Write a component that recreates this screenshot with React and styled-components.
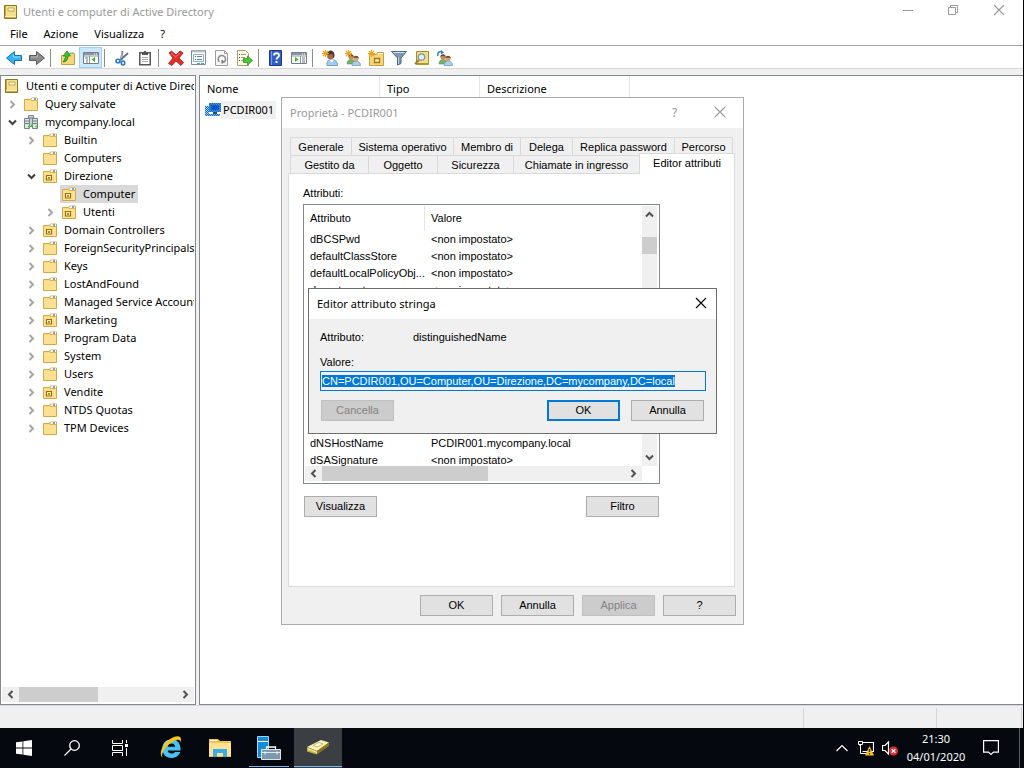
import React, { useEffect, useRef } from "react";
import styled, { createGlobalStyle, css } from "styled-components";

const Global = createGlobalStyle`
  *, *::before, *::after { box-sizing: border-box; }
  body { margin: 0; background: #000; }
  button, input { font: inherit; color: inherit; }
  svg { flex: none; }
`;

const shellFont = `"Noto Sans", "Open Sans", sans-serif`;
const dialogFont = `"Liberation Sans", Arial, sans-serif`;

/* ---------- main window ---------- */

const Desktop = styled.div`
  position: relative;
  display: flex;
  flex-direction: column;
  min-height: 100vh;
  font: 11px/18px ${shellFont};
  color: #000;
`;

const MainWindow = styled.main`
  flex: 1;
  display: flex;
  flex-direction: column;
  min-width: 0;
  background: #f0f0f0;
  border-right: 1px solid #000;
`;

const TitleBar = styled.header`
  display: flex;
  align-items: center;
  height: 24px;
  padding-left: 3px;
  gap: 4px;
  background: #fff;
  color: #999;
`;

const Title = styled.h1`
  flex: 1;
  margin: 0;
  font-size: 11px;
  font-weight: 400;
`;

const CaptionButtons = styled.div`
  display: flex;
  align-self: flex-start;
`;

const CaptionButton = styled.button`
  display: grid;
  place-items: center;
  width: ${(p) => p.$width || 45}px;
  height: 20px;
  padding: 0;
  border: 0;
  background: none;
  font-size: 12px;
`;

const MenuBar = styled.nav`
  display: flex;
  height: 21px;
  padding-left: 2px;
  background: #fff;
`;

const MenuItem = styled.button`
  height: 20px;
  padding: 0 8px;
  border: 0;
  background: none;
`;

const Toolbar = styled.div`
  display: flex;
  align-items: center;
  height: 24px;
  padding: 1px 0 0 2px;
  background: #fff;
  border-top: 1px solid #a5a5ad;
  border-bottom: 1px solid #d8d8d8;
`;

const ToolButton = styled.button`
  display: grid;
  place-items: center;
  width: 23px;
  height: 21px;
  padding: 0;
  border: 1px solid ${(p) => (p.$on ? "#99d1ff" : "transparent")};
  background: ${(p) => (p.$on ? "#cce8ff" : "none")};
`;

const ToolDivider = styled.span`
  width: 8px;
  height: 18px;
  padding-left: 2px;
  &::before {
    content: "";
    display: block;
    width: 1px;
    height: 100%;
    background: #8c8c8c;
  }
`;

const Panes = styled.div`
  flex: 1;
  display: flex;
  gap: 3px;
  padding-top: 6px;
  min-height: 0;
`;

const Pane = styled.section`
  display: flex;
  flex-direction: column;
  min-width: 0;
  background: #fff;
  border: 1px solid #828790;
  ${(p) => (p.$width ? css`width: ${p.$width}px;` : css`flex: 1; border-right: 0;`)}
`;

const Tree = styled.ul`
  flex: 1;
  margin: 0 1px 0 0;
  padding: 1px 0 0;
  list-style: none;
  overflow: hidden;
`;

const TreeRow = styled.li`
  display: flex;
  align-items: center;
  height: 18px;
  padding-left: ${(p) => (p.$depth ? p.$depth * 19 - 14 : 2)}px;
  white-space: nowrap;
`;

const Twisty = styled.span`
  display: grid;
  place-items: center;
  flex: none;
  width: 13px;
  margin-right: 3px;
`;

const TreeNode = styled.span`
  display: flex;
  align-items: center;
  gap: 6px;
  height: 18px;
  padding: 0 3px 0 1px;
  background: ${(p) => (p.$selected ? "#d9d9d9" : "none")};
`;

const ListHead = styled.div`
  display: flex;
  height: 22px;
  line-height: 25px;
`;

const ListHeadCell = styled.span`
  width: ${(p) => p.$width}px;
  padding-left: 7px;
  border-right: 1px solid #e5e5e5;
`;

const ListItem = styled.div`
  display: flex;
  align-items: center;
  height: 18px;
  margin: 3px 0 0 5px;
`;

const ListLabel = styled.span`
  height: 18px;
  padding: 0 2px;
  background: #f0f0f0;
`;

const StatusBar = styled.footer`
  display: flex;
  justify-content: flex-end;
  height: 23px;
  padding-top: 2px;
  border-top: 1px solid #d8d8d8;
`;

const StatusCell = styled.span`
  width: ${(p) => p.$width}px;
  height: 20px;
  border-left: 1px solid #d5d5d5;
`;

/* ---------- scroll bars ---------- */

const ScrollTrack = styled.div`
  display: flex;
  align-items: center;
  flex-direction: ${(p) => (p.$vertical ? "column" : "row")};
  flex: none;
  ${(p) => (p.$vertical ? "width: 15px;" : "height: 15px;")}
  margin: ${(p) => p.$margin || "0"};
  background: #f0f0f0;
`;

const ScrollArrow = styled.button`
  display: grid;
  place-items: center;
  width: 17px;
  height: 17px;
  padding: 0;
  border: 0;
  background: none;
`;

const ScrollThumb = styled.span`
  ${(p) =>
    p.$vertical
      ? css`width: 100%; height: ${p.$size}px; margin-top: ${p.$offset}px;`
      : css`height: 100%; width: ${p.$size}px;`}
  background: #cdcdcd;
`;

const Grow = styled.span`
  flex: 1;
`;

/* ---------- dialogs ---------- */

const Dialog = styled.section`
  position: absolute;
  left: ${(p) => p.$x}px;
  top: ${(p) => p.$y}px;
  width: ${(p) => p.$width}px;
  display: flex;
  flex-direction: column;
  background: #f0f0f0;
  border: 1px solid ${(p) => (p.$active ? "#6d6d6d" : "#aaa")};
  font: 11px/17px ${dialogFont};
`;

const DialogTitle = styled.header`
  display: flex;
  align-items: center;
  height: 30px;
  padding: 0 1px 2px 8px;
  background: #fff;
  color: ${(p) => (p.$active ? "#000" : "#999")};
  font-family: ${shellFont};
`;

const DialogHeading = styled.h2`
  flex: 1;
  margin: 0;
  font-size: 11px;
  font-weight: 400;
`;

const TabArea = styled.div`
  padding: 9px 8px 0 6px;
`;

const TabRow = styled.div`
  display: flex;
  height: 18px;
  padding-left: 2px;
`;

const Tab = styled.button`
  flex: none;
  width: ${(p) => p.$width}px;
  height: 18px;
  padding: 1px 0 0;
  border: 1px solid #d9d9d9;
  border-width: 1px 0 0 1px;
  background: #f0f0f0;
  &:last-child {
    border-right-width: 1px;
  }
  ${(p) =>
    p.$active &&
    css`
      position: relative;
      height: 21px;
      margin-top: -2px;
      padding: 0 0 2px;
      background: #fff;
    `}
`;

const TabPanel = styled.div`
  height: 414px;
  padding: 11px 14px;
  background: #fff;
  border: 1px solid #d9d9d9;
`;

const AttributeBox = styled.div`
  display: flex;
  flex-direction: column;
  width: 357px;
  height: 280px;
  margin: 2px 0 12px;
  padding: 1px;
  border: 1px solid #828790;
`;

const AttributeView = styled.div`
  flex: 1;
  display: flex;
  min-height: 0;
`;

const AttributeScroll = styled.div`
  flex: 1;
  overflow: hidden;
`;

const AttributeTable = styled.table`
  width: 100%;
  table-layout: fixed;
  border-spacing: 0;
  white-space: nowrap;
  th {
    height: 25px;
    padding: 0 5px;
    text-align: left;
    font-weight: 400;
  }
  th:first-child {
    width: 120px;
    border-right: 1px solid #e5e5e5;
  }
  th:last-child,
  td:last-child {
    padding-left: 6px;
  }
  td {
    height: 17px;
    padding: 0 0 0 5px;
  }
`;

const ButtonRow = styled.div`
  display: flex;
  justify-content: ${(p) => p.$justify || "flex-end"};
  gap: ${(p) => p.$gap || 8}px;
  ${(p) => p.$width && css`width: ${p.$width}px;`}
  padding: ${(p) => p.$padding || "0"};
`;

const PushButton = styled.button`
  width: 73px;
  height: 21px;
  padding: 0;
  border: 1px solid #adadad;
  background: #e1e1e1;
  ${(p) => p.$primary && css`border: 2px solid #0078d7;`}
  &:disabled {
    color: #838383;
    background: #ccc;
    border-color: #bfbfbf;
  }
`;

const EditorBody = styled.div`
  display: flex;
  flex-direction: column;
  padding: 10px 10px 12px 11px;
`;

const FieldLine = styled.div`
  display: flex;
  height: 25px;
`;

const FieldLabel = styled.label`
  height: 17px;
`;

const FieldName = styled.span`
  width: 93px;
`;

const ValueInput = styled.input`
  width: 100%;
  height: 20px;
  margin-bottom: 9px;
  padding: 0 1px;
  border: 1px solid #0078d7;
  border-radius: 0;
  outline: 0;
  background: #f0f0f0;
  caret-color: transparent;
  &::selection {
    color: #fff;
    background: #0078d7;
  }
`;

/* ---------- taskbar ---------- */

const Taskbar = styled.footer`
  display: flex;
  align-items: center;
  height: 40px;
  background: #05080e;
  color: #fff;
`;

const TaskButton = styled.button`
  display: grid;
  place-items: center;
  width: 48px;
  height: 40px;
  padding: 0;
  border: 0;
  background: none;
  ${(p) =>
    p.$running &&
    css`
      background-image: linear-gradient(#76b9ed, #76b9ed);
      background-size: ${p.$active ? "48px" : "40px"} 1px;
      background-position: center 38px;
      background-repeat: no-repeat;
      background-color: ${p.$active ? "#3b3e42" : "transparent"};
    `}
`;

const PinnedApps = styled.div`
  display: flex;
  gap: 1px;
  margin-left: 3px;
`;

const Tray = styled.div`
  display: flex;
  align-items: center;
  gap: 8px;
  margin-left: auto;
  height: 40px;
`;

const TrayButton = styled.button`
  display: grid;
  place-items: center;
  width: 16px;
  height: 24px;
  padding: 0;
  border: 0;
  background: none;
`;

const Clock = styled.time`
  width: 60px;
  margin-right: 9px;
  text-align: center;
  line-height: 18px;
`;

const ShowDesktop = styled.button`
  width: 5px;
  height: 40px;
  margin-left: 12px;
  padding: 0;
  border: 0;
  border-left: 1px solid #5a5c60;
  background: none;
`;

/* ---------- icons ---------- */

const Icon = ({ size = 16, children, ...rest }) => (
  <svg width={size} height={size} viewBox={`0 0 ${size} ${size}`} aria-hidden="true" {...rest}>
    {children}
  </svg>
);

const BookIcon = () => (
  <Icon>
    <path d="M1.500 1.500h12v13h-12z" fill="#cda93c" stroke="#8f7620" />
    <path d="M3 2h10v10H3z" fill="#f3df8e" />
    <path d="M5 4h6v3H5z" fill="#fffbe6" stroke="#c3a548" />
    <path d="M2 12.500h11" stroke="#fff3bb" />
  </Icon>
);

const FolderIcon = ({ ou }) => (
  <Icon>
    <path d="M1.500 14.500v-11h6l1-1.500h6v12.500z" fill="#f9d983" stroke="#d3a948" />
    <path d="M2 5h12v9H2z" fill="#fbe092" />
    <path d="M9 3h5" stroke="#fff" strokeWidth="1.500" />
    <path d="M11 3h2" stroke="#2f91e5" strokeWidth="1.500" />
    <path d="M8 4.500h6" stroke="#d9b45a" />
    {ou && <path d="M4.500 7.500h5v4.500h-5z" fill="#fff0af" stroke="#92701a" strokeWidth="1.200" />}
    {ou && <path d="M6 9h2v2H6z" fill="#b58d28" />}
  </Icon>
);

const DomainIcon = () => (
  <Icon>
    <path d="M5.500 1.500h5v11h-5z" fill="#c7d0d6" stroke="#7d8991" />
    <path d="M1.500 4.500h5v10h-5zM9.500 4.500h5v10h-5z" fill="#dde3e7" stroke="#77838b" />
    <path d="M2 7h4M2 9.500h4M10 7h4M10 9.500h4M6 4h4" stroke="#6e7b84" />
    <path d="M5 12.500h2M8 11h1.500M12.500 12.500h2" stroke="#3fd41c" strokeWidth="2" />
  </Icon>
);

const ComputerIcon = () => (
  <Icon>
    <defs>
      <pattern id="dither" width="2" height="2" patternUnits="userSpaceOnUse">
        <path d="M0 0h1v1H0zM1 1h1v1H1z" fill="#0f6fd0" />
      </pattern>
    </defs>
    <path d="M0 4h4v10H0z" fill="#a9c9e6" />
    <path d="M4 1h12v9H4z" fill="#4f8fd8" />
    <path d="M6 3h8v5H6z" fill="#0c3fb0" />
    <path d="M8 10h4v2H8z" fill="#1a4c96" />
    <path d="M3 12h12v2H3z" fill="#8db8e2" />
    <path d="M0 4h4v10H0zM4 1h12v9H4zM3 12h12v2H3z" fill="url(#dither)" />
  </Icon>
);

const ArrowIcon = ({ forward }) => (
  <Icon>
    <path
      d={forward ? "M.5 5.500h7V1.500L15.500 8l-8 6.500v-4h-7z" : "M15.500 5.500h-7V1.500L.5 8l8 6.500v-4h7z"}
      fill={forward ? "#8b8b8b" : "#35b2ef"}
      stroke={forward ? "#5a5a5a" : "#1a70b5"}
    />
    <path d={forward ? "M2 7h6.500V4.500" : "M14 7H7.500V4.500"} fill="none" stroke={forward ? "#b4b4b4" : "#93ddfb"} />
  </Icon>
);

const FolderUpIcon = () => (
  <Icon>
    <path d="M1.500 14.500v-9h5l1-2h7v11z" fill="#f8d67b" stroke="#c79e3e" />
    <path d="M10 3h4" stroke="#6db2e9" />
    <path d="M3 12c3 0 5-2 5-6h2.500L7 1 3 6h2.500c0 2-1 4-2.500 6z" fill="#42be35" stroke="#23871c" strokeWidth=".8" />
  </Icon>
);

const WindowTreeIcon = ({ play }) => (
  <Icon>
    <path d="M.5 2.500h15v11H.5z" fill="#fff" stroke="#737f88" />
    <path d="M1 3h14v2H1z" fill="#8b98a1" />
    <path d="M11 4h1M13 4h1" stroke="#fff" />
    <path d="M1 6h14" stroke="#8b98a1" />
    {play ? (
      <>
        <path d="M9.500 6v7" stroke="#8b98a1" />
        <path d="M4 7v5l3.500-2.500z" fill="#3db526" />
        <path d="M11 8h3M11 10h3M11 12h3" stroke="#6d7a84" />
      </>
    ) : (
      <>
        <path d="M6.500 6v7" stroke="#8b98a1" />
        <path d="M12 7v5L8.500 9.500z" fill="#3db526" />
        <path d="M2 8h3M3 10h2M3 12h2" stroke="#6d7a84" />
      </>
    )}
  </Icon>
);

const ScissorsIcon = () => (
  <Icon>
    <path d="M8.500 1 7 9.500M14 3 6.500 10" stroke="#5d7287" strokeWidth="1.800" />
    <path d="M8 2 7.500 8" stroke="#cfdbe5" strokeWidth=".7" />
    <ellipse cx="4" cy="11" rx="2" ry="1.800" fill="none" stroke="#2877cc" strokeWidth="1.600" />
    <ellipse cx="9" cy="13" rx="1.700" ry="2" fill="none" stroke="#2877cc" strokeWidth="1.600" />
  </Icon>
);

const ClipboardIcon = () => (
  <Icon>
    <path d="M2.750 2.750h10.500v12H2.750z" fill="#fff" stroke="#555" strokeWidth="1.500" />
    <path d="M5 5V2h2V1h2v1h2v3z" fill="#555" />
    <path d="M5 7.500h6M5 9.500h6M5 11.500h6" stroke="#aaa" />
  </Icon>
);

const DeleteIcon = () => (
  <Icon>
    <path d="m1 3 2.500-2L8 5l4-4 3 2-4 5 4.500 4.500L13 15.500 8 11l-4 4.500-3.500-2L5 8z" fill="#e32d2d" stroke="#ad1515" strokeWidth=".8" />
    <path d="m3 3 4.500 4L12 3" fill="none" stroke="#f27a70" />
  </Icon>
);

const PropertiesIcon = () => (
  <Icon>
    <path d="M.5.500h14v14H.5z" fill="#fff" stroke="#7f8d98" />
    <path d="M1 1.500h13" stroke="#b8c5ce" strokeWidth="2" />
    <path d="M2.500 4.500h10v7h-10z" fill="#f5fbff" stroke="#98aebd" />
    <path d="M4 6.500h1M4 9.500h1" stroke="#1f80cc" />
    <path d="M6 6.500h5M6 9.500h5" stroke="#6d8090" />
    <path d="M6 13.500h3M10 13.500h3" stroke="#35abd8" />
  </Icon>
);

const RefreshIcon = () => (
  <Icon>
    <path d="M1.500.5h9l3 3v12h-12z" fill="#f7f7f7" stroke="#9d9d9d" />
    <path d="M10.500.5v3h3" fill="none" stroke="#9d9d9d" />
    <path d="M5.500 12a3.700 3.700 0 1 1 4.500.2" fill="none" stroke="#8b8b8b" strokeWidth="1.600" />
    <path d="M7.500 9.500V14l3.500-2z" fill="#777" />
  </Icon>
);

const ExportIcon = () => (
  <Icon>
    <path d="M.5.5h8l3 3v12H.5z" fill="#fffbe2" stroke="#a8a06f" />
    <path d="M2 4.500h1M2 7.500h1M2 10.500h1" stroke="#444" />
    <path d="M4 4.500h5M4 7.500h4M4 10.500h3" stroke="#999" />
    <path d="M6.500 8.500h4V6l5 4.500-5 4.500v-2.500h-4z" fill="#4cc63a" stroke="#318d24" strokeWidth=".8" />
  </Icon>
);

const HelpIcon = () => (
  <Icon>
    <path d="M1.500.5h12v15h-12z" fill="#305fc6" stroke="#1b388e" />
    <path d="M3.500 1v14" stroke="#7c9de6" />
    <path d="M6 5.500c0-3 5-3 5 0 0 2-2.500 2-2.500 4" fill="none" stroke="#fff" strokeWidth="1.800" />
    <path d="M7.500 11h2v2h-2z" fill="#fff" />
  </Icon>
);

const Spark = () => (
  <path d="M3.500 0v7M0 3.500h7M1 1l5 5M6 1 1 6" stroke="#eda21c" strokeWidth="1.100" />
);

const Person = ({ x, y, shirt, skin, hair }) => (
  <g transform={`translate(${x} ${y})`}>
    <path d="M0 10c0-3 1.500-4.500 4-4.500S8.500 7 8.500 10z" fill={shirt} stroke="#5788b5" strokeWidth=".6" />
    <circle cx="4" cy="3.300" r="2.500" fill={skin} />
    <path d="M1.300 3C1.300-.7 6.800-.7 6.800 3 5 2 3 1.500 1.300 3z" fill={hair} />
  </g>
);

const UserIcon = () => (
  <Icon>
    <path d="M5 15.500c-.5-4 1-6 4.500-6s6 2 6 6z" fill="#a3cdf0" stroke="#5c8dba" strokeWidth=".8" />
    <path d="m7 9.500 3 3 2-3z" fill="#fff" />
    <ellipse cx="8.500" cy="5.500" rx="3.500" ry="4" fill="#a36d45" />
    <path d="M5 5c0-6 7.500-6 7.500 0 0 2-.5 3-1 3.500L10.500 4z" fill="#4f3a2b" />
    <Spark />
  </Icon>
);

const GroupIcon = ({ refresh }) => (
  <Icon>
    <Person x={2} y={4} shirt="#76b44d" skin="#c98e59" hair="#6a452a" />
    <Person x={7} y={5.500} shirt="#a8d0f0" skin="#d8a26c" hair="#5e4630" />
    {refresh ? (
      <>
        <path d="M1 6C0 2 3 1 5 2" fill="none" stroke="#2585d0" strokeWidth="1.500" />
        <path d="M4 0v4.500L7 2.500z" fill="#2585d0" />
      </>
    ) : (
      <Spark />
    )}
  </Icon>
);

const NewOuIcon = () => (
  <Icon>
    <path d="M1.500 15.500v-11h7l1-2h6v13z" fill="#f8d67b" stroke="#c79e3e" />
    <path d="M10 3.500h5" stroke="#fff" />
    <path d="M6.500 8.500h5v4h-5z" fill="#fff0ae" stroke="#a27a1c" strokeWidth="1.400" />
    <Spark />
  </Icon>
);

const FilterIcon = () => (
  <Icon>
    <path d="M.5 1.500h15L10 8v5.500L6.500 15V8z" fill="#7d98b1" stroke="#4d6984" />
    <path d="M2.500 2.500h11" stroke="#d5e4f0" />
    <path d="M7.500 7v7" stroke="#b9cfe0" />
  </Icon>
);

const FindIcon = () => (
  <Icon>
    <path d="M2.500 1.500h12v13h-12z" fill="#f1dd8a" stroke="#a68b29" />
    <path d="M3 13h11v2H3z" fill="#b4942b" />
    <path d="m5 10-4 4" stroke="#a57c3a" strokeWidth="2" />
    <circle cx="7.500" cy="7" r="3.200" fill="#dff1fc" stroke="#7895a5" strokeWidth="1.200" />
  </Icon>
);

const Chevron = ({ dir, color = "#505050", size = 9 }) => {
  const turn = { right: 0, down: 90, left: 180, up: 270 }[dir];
  return (
    <svg width={size} height={size} viewBox="0 0 9 9" aria-hidden="true">
      <path d="m2.500 1 3.500 3.500L2.500 8" fill="none" stroke={color} strokeWidth="2" transform={`rotate(${turn} 4.500 4.500)`} />
    </svg>
  );
};

const CloseIcon = ({ color }) => (
  <Icon size={12}>
    <path d="m1 1 10 10M11 1 1 11" stroke={color} strokeWidth="1.100" />
  </Icon>
);

const StartIcon = () => (
  <Icon>
    <path d="M0 2.300 6.500 1.400v6.200H0zM7.300 1.300 16 0v7.600H7.300zM0 8.400h6.500v6.200L0 13.700zM7.300 8.400H16V16l-8.700-1.300z" fill="#fff" />
  </Icon>
);

const SearchIcon = () => (
  <Icon>
    <circle cx="10.500" cy="5.500" r="4.800" fill="none" stroke="#fff" strokeWidth="1.300" />
    <path d="M7 9 .5 15.500" stroke="#fff" strokeWidth="1.300" />
  </Icon>
);

const TaskViewIcon = () => (
  <Icon>
    <path d="M.5 0v3.500h10V0M.5 16v-3.500h10V16M.5 5.500h10v5H.5z" fill="none" stroke="#fff" />
    <path d="M14.500 0v3M14.500 8v8" stroke="#fff" />
    <path d="M13 4h3v3h-3z" fill="#fff" />
  </Icon>
);

const ExplorerEIcon = () => (
  <Icon size={24}>
    <path d="M21.500 14.500H8.700c.4 2 1.800 3 3.900 3 1.600 0 2.800-.5 3.500-1.500h5.100c-1.200 3.700-4.500 6-8.700 6-5.400 0-9.300-3.900-9.300-9.300S7.200 3.200 12.600 3.200c5.800 0 9.400 4.500 8.900 11.300zM8.800 10.800h7.300c-.3-2-1.600-3.200-3.600-3.200s-3.300 1.200-3.700 3.200z" fill="#48c2f2" />
    <path d="M5 9c1.500-3.500 4-5 8-5" fill="none" stroke="#aee9fd" />
    <path d="M3.500 21.500C-1 18 4 7 12 2.500c5-3 10-3 10 1 0 1-.3 2-.8 3 .3-3.800-3-3.500-7.200-1C7 9.500 1.500 17.500 3.500 21.500z" fill="#f8c51d" />
  </Icon>
);

const FilesIcon = () => (
  <Icon size={22}>
    <path d="M0 2h9l2 2h11v16H0z" fill="#f4c34c" />
    <path d="M0 6h22v13H0z" fill="#fde295" />
    <path d="M1 3.500h7" stroke="#fff" />
    <path d="M4 20v-8h14v8h-4v-4H8v4z" fill="#38aee9" />
  </Icon>
);

const ServerIcon = () => (
  <Icon size={24}>
    <path d="M.5.5h11v21H.5z" fill="#168bd5" stroke="#9cd6f7" />
    <path d="M1 5.500h10" stroke="#fff" />
    <path d="M9.500 13v-2h9v2" fill="none" stroke="#fff" strokeWidth="1.300" />
    <path d="M4.500 13.500h19v10h-19z" fill="#7d98ab" stroke="#d7e3eb" />
    <path d="M5 16.500h18" stroke="#dce7ee" />
    <path d="M8 15.500v3M20 15.500v3" stroke="#fff" />
  </Icon>
);

const DirectoryIcon = () => (
  <Icon size={24}>
    <path d="m1 11 14-7 8 2.500L11 15z" fill="#fbf4b8" />
    <path d="m1 11 10 4v3.500L1 15.500z" fill="#c7b44e" />
    <path d="m11 15 12-8.500V10L11 18.500z" fill="#8b7720" />
    <path d="m7 9.500 6-3 4 1.500-6 3z" fill="#fffef0" stroke="#b49e3a" strokeWidth=".7" />
    <path d="m2 13 9 3.500" stroke="#fff5b5" />
  </Icon>
);

const NetworkIcon = () => (
  <Icon>
    <path d="M4.500 2.500h11v9h-11" fill="none" stroke="#fff" strokeWidth="1.200" />
    <path d="M.5 1.500h4v3h-4zM2.500 5v8.500H9M2 6v-1" fill="none" stroke="#fff" />
    <path d="M11.500 6 16 15.500H7z" fill="#ffc515" />
    <path d="M11.500 9v3M11.500 13.200v1.300" stroke="#222" strokeWidth="1.300" />
  </Icon>
);

const SpeakerIcon = () => (
  <Icon>
    <path d="M.5 5.500H3L6.500 2v12L3 10.500H.5z" fill="none" stroke="#fff" strokeWidth="1.200" />
    <circle cx="11.500" cy="11" r="4.500" fill="#df2c37" />
    <path d="m9.700 9.200 3.600 3.600M13.300 9.200l-3.600 3.600" stroke="#fff" strokeWidth="1.300" />
  </Icon>
);

const NoticeIcon = () => (
  <Icon>
    <path d="M.6.6h14.800v11.500h-4.900L8 14.500l-2.500-2.400H.6z" fill="none" stroke="#fff" strokeWidth="1.200" />
  </Icon>
);

/* ---------- data ---------- */

const toolGroups = [
  [["Indietro", <ArrowIcon />], ["Avanti", <ArrowIcon forward />]],
  [["Livello superiore", <FolderUpIcon />], ["Albero console", <WindowTreeIcon />, true]],
  [["Taglia", <ScissorsIcon />], ["Copia", <ClipboardIcon />]],
  [["Elimina", <DeleteIcon />], ["Proprietà", <PropertiesIcon />], ["Aggiorna", <RefreshIcon />], ["Esporta", <ExportIcon />]],
  [["Guida", <HelpIcon />], ["Riquadro azioni", <WindowTreeIcon play />]],
  [
    ["Nuovo utente", <UserIcon />],
    ["Nuovo gruppo", <GroupIcon />],
    ["Nuova unità", <NewOuIcon />],
    ["Filtro", <FilterIcon />],
    ["Trova", <FindIcon />],
    ["Aggiungi a gruppo", <GroupIcon refresh />],
  ],
];

const tree = [
  { depth: 0, label: "Utenti e computer di Active Directory", icon: "book" },
  { depth: 1, label: "Query salvate", state: "closed" },
  { depth: 1, label: "mycompany.local", state: "open", icon: "domain" },
  { depth: 2, label: "Builtin", state: "closed" },
  { depth: 2, label: "Computers" },
  { depth: 2, label: "Direzione", state: "open", icon: "ou" },
  { depth: 3, label: "Computer", icon: "ou", selected: true },
  { depth: 3, label: "Utenti", state: "closed", icon: "ou" },
  { depth: 2, label: "Domain Controllers", state: "closed", icon: "ou" },
  { depth: 2, label: "ForeignSecurityPrincipals", state: "closed" },
  { depth: 2, label: "Keys", state: "closed" },
  { depth: 2, label: "LostAndFound", state: "closed" },
  { depth: 2, label: "Managed Service Accounts", state: "closed" },
  { depth: 2, label: "Marketing", state: "closed", icon: "ou" },
  { depth: 2, label: "Program Data", state: "closed" },
  { depth: 2, label: "System", state: "closed" },
  { depth: 2, label: "Users", state: "closed" },
  { depth: 2, label: "Vendite", state: "closed", icon: "ou" },
  { depth: 2, label: "NTDS Quotas", state: "closed" },
  { depth: 2, label: "TPM Devices", state: "closed" },
];

const unset = "<non impostato>";
const attributes = [
  ["dBCSPwd", unset],
  ["defaultClassStore", unset],
  ["defaultLocalPolicyObj...", unset],
  ["department", unset],
  ...Array.from({ length: 8 }, () => ["", ""]),
  ["dNSHostName", "PCDIR001.mycompany.local"],
  ["dSASignature", unset],
];

const backTabs = [
  ["Generale", 61],
  ["Sistema operativo", 102],
  ["Membro di", 67],
  ["Delega", 52],
  ["Replica password", 102],
  ["Percorso", 59],
];
const frontTabs = [
  ["Gestito da", 78],
  ["Oggetto", 69],
  ["Sicurezza", 76],
  ["Chiamate in ingresso", 126],
  ["Editor attributi", 96, true],
];

/* ---------- composition ---------- */

function NodeIcon({ kind }) {
  if (kind === "book") return <BookIcon />;
  if (kind === "domain") return <DomainIcon />;
  return <FolderIcon ou={kind === "ou"} />;
}

function TreePane() {
  return (
    <Pane $width={196}>
      <Tree>
        {tree.map((n) => (
          <TreeRow key={n.label} $depth={n.depth}>
            {n.depth > 0 && (
              <Twisty>
                {n.state && <Chevron dir={n.state === "open" ? "down" : "right"} color={n.state === "open" ? "#404040" : "#a6a6a6"} />}
              </Twisty>
            )}
            <TreeNode $selected={n.selected}>
              <NodeIcon kind={n.icon} />
              {n.label}
            </TreeNode>
          </TreeRow>
        ))}
      </Tree>
      <ScrollTrack $margin="0 1px 2px">
        <ScrollArrow aria-label="Scorri a sinistra"><Chevron dir="left" /></ScrollArrow>
        <ScrollThumb $size={79} />
        <Grow />
        <ScrollArrow aria-label="Scorri a destra"><Chevron dir="right" /></ScrollArrow>
      </ScrollTrack>
    </Pane>
  );
}

function ListPane() {
  return (
    <Pane>
      <ListHead>
        <ListHeadCell $width={180}>Nome</ListHeadCell>
        <ListHeadCell $width={100}>Tipo</ListHeadCell>
        <ListHeadCell $width={150}>Descrizione</ListHeadCell>
      </ListHead>
      <ListItem>
        <ComputerIcon />
        <ListLabel>PCDIR001</ListLabel>
      </ListItem>
    </Pane>
  );
}

function PropertiesDialog() {
  return (
    <Dialog $x={281} $y={97} $width={463} aria-label="Proprietà - PCDIR001">
      <DialogTitle>
        <DialogHeading>Proprietà - PCDIR001</DialogHeading>
        <CaptionButton>?</CaptionButton>
        <CaptionButton aria-label="Chiudi"><CloseIcon color="#999" /></CaptionButton>
      </DialogTitle>
      <TabArea>
        <TabRow>
          {backTabs.map(([label, width]) => <Tab key={label} $width={width}>{label}</Tab>)}
        </TabRow>
        <TabRow>
          {frontTabs.map(([label, width, active]) => <Tab key={label} $width={width} $active={active}>{label}</Tab>)}
        </TabRow>
        <TabPanel>
          Attributi:
          <AttributeBox>
            <AttributeView>
              <AttributeScroll>
                <AttributeTable>
                  <thead>
                    <tr><th>Attributo</th><th>Valore</th></tr>
                  </thead>
                  <tbody>
                    {attributes.map(([name, value], i) => (
                      <tr key={i}><td>{name}</td><td>{value}</td></tr>
                    ))}
                  </tbody>
                </AttributeTable>
              </AttributeScroll>
              <ScrollTrack $vertical $margin="0 1px 0 0">
                <ScrollArrow aria-label="Scorri su"><Chevron dir="up" /></ScrollArrow>
                <ScrollThumb $vertical $size={17} $offset={14} />
                <Grow />
                <ScrollArrow aria-label="Scorri giù"><Chevron dir="down" /></ScrollArrow>
              </ScrollTrack>
            </AttributeView>
            <ScrollTrack $margin="0 16px 1px 0">
              <ScrollArrow aria-label="Scorri a sinistra"><Chevron dir="left" /></ScrollArrow>
              <ScrollThumb $size={166} />
              <Grow />
              <ScrollArrow aria-label="Scorri a destra"><Chevron dir="right" /></ScrollArrow>
            </ScrollTrack>
          </AttributeBox>
          <ButtonRow $justify="space-between" $width={357} $padding="0 1px">
            <PushButton>Visualizza</PushButton>
            <PushButton>Filtro</PushButton>
          </ButtonRow>
        </TabPanel>
      </TabArea>
      <ButtonRow $padding="8px 7px 8px">
        <PushButton>OK</PushButton>
        <PushButton>Annulla</PushButton>
        <PushButton disabled>Applica</PushButton>
        <PushButton>?</PushButton>
      </ButtonRow>
    </Dialog>
  );
}

function StringEditorDialog() {
  const input = useRef(null);
  useEffect(() => {
    input.current.focus();
    input.current.select();
  }, []);
  return (
    <Dialog $x={308} $y={288} $width={409} $active aria-label="Editor attributo stringa">
      <DialogTitle $active>
        <DialogHeading>Editor attributo stringa</DialogHeading>
        <CaptionButton $width={29} aria-label="Chiudi"><CloseIcon color="#000" /></CaptionButton>
      </DialogTitle>
      <EditorBody>
        <FieldLine>
          <FieldName>Attributo:</FieldName>
          <span>distinguishedName</span>
        </FieldLine>
        <FieldLabel htmlFor="value">Valore:</FieldLabel>
        <ValueInput
          id="value"
          ref={input}
          readOnly
          value="CN=PCDIR001,OU=Computer,OU=Direzione,DC=mycompany,DC=local"
        />
        <ButtonRow $gap={11} $padding="0 2px 0 1px">
          <PushButton disabled>Cancella</PushButton>
          <Grow />
          <PushButton $primary>OK</PushButton>
          <PushButton>Annulla</PushButton>
        </ButtonRow>
      </EditorBody>
    </Dialog>
  );
}

export default function App() {
  return (
    <>
      <Global />
      <Desktop>
        <MainWindow>
          <TitleBar>
            <BookIcon />
            <Title>Utenti e computer di Active Directory</Title>
            <CaptionButtons>
              <CaptionButton aria-label="Riduci a icona">
                <Icon size={12}><path d="M1 6.500h10" stroke="#999" /></Icon>
              </CaptionButton>
              <CaptionButton aria-label="Ripristina">
                <Icon size={12}>
                  <path d="M1.500 3.500h7v7h-7zM3.500 3V1.500h7v7H9" fill="none" stroke="#999" />
                </Icon>
              </CaptionButton>
              <CaptionButton $width={48} aria-label="Chiudi"><CloseIcon color="#999" /></CaptionButton>
            </CaptionButtons>
          </TitleBar>
          <MenuBar>
            {["File", "Azione", "Visualizza", "?"].map((m) => <MenuItem key={m}>{m}</MenuItem>)}
          </MenuBar>
          <Toolbar>
            {toolGroups.map((group, i) => (
              <React.Fragment key={i}>
                {i > 0 && <ToolDivider />}
                {group.map(([label, icon, on]) => (
                  <ToolButton key={label} aria-label={label} $on={on}>{icon}</ToolButton>
                ))}
              </React.Fragment>
            ))}
          </Toolbar>
          <Panes>
            <TreePane />
            <ListPane />
          </Panes>
          <StatusBar>
            <StatusCell $width={133} />
            <StatusCell $width={85} />
            <StatusCell $width={2} />
          </StatusBar>
        </MainWindow>
        <Taskbar>
          <TaskButton aria-label="Start"><StartIcon /></TaskButton>
          <TaskButton aria-label="Cerca"><SearchIcon /></TaskButton>
          <TaskButton aria-label="Visualizzazione attività"><TaskViewIcon /></TaskButton>
          <PinnedApps>
            <TaskButton aria-label="Internet Explorer"><ExplorerEIcon /></TaskButton>
            <TaskButton aria-label="Esplora file"><FilesIcon /></TaskButton>
            <TaskButton $running aria-label="Server Manager"><ServerIcon /></TaskButton>
            <TaskButton $running $active aria-label="Utenti e computer"><DirectoryIcon /></TaskButton>
          </PinnedApps>
          <Tray>
            <TrayButton aria-label="Icone nascoste">
              <Icon><path d="m2.500 11 5.500-5.500 5.500 5.500" fill="none" stroke="#fff" strokeWidth="1.200" /></Icon>
            </TrayButton>
            <TrayButton aria-label="Rete"><NetworkIcon /></TrayButton>
            <TrayButton aria-label="Volume"><SpeakerIcon /></TrayButton>
            <Clock>21:30<br />04/01/2020</Clock>
            <TrayButton aria-label="Notifiche"><NoticeIcon /></TrayButton>
            <ShowDesktop aria-label="Mostra desktop" />
          </Tray>
        </Taskbar>
        <PropertiesDialog />
        <StringEditorDialog />
      </Desktop>
    </>
  );
}
